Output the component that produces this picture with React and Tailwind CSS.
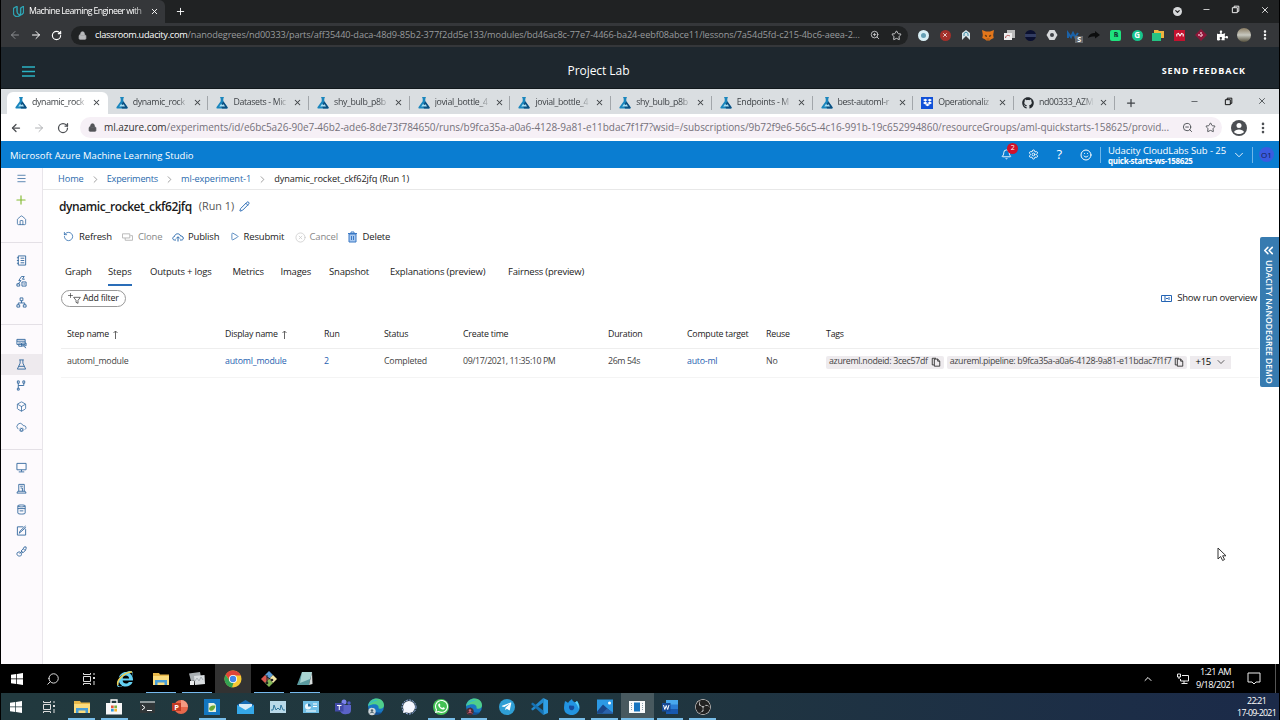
import React from 'react';
import { FaGithub, FaDropbox, FaWhatsapp, FaTelegramPlane, FaInternetExplorer, FaPuzzlePiece } from 'react-icons/fa';
import { SiUdacity, SiObsstudio } from 'react-icons/si';
import {
  ArrowLeft, ArrowRight, RotateCw, Lock, X, Plus, Minus, ZoomIn, ZoomOut, Star, ChevronRight, ChevronDown,
  ChevronUp, ChevronsLeft, Menu, Home, Bell, Settings, Smile, Pencil, Play, CircleX,
  Box, MoreVertical, Search, CloudCog
} from 'lucide-react';

const innerTabs = [
  { title: 'dynamic_rock', icon: 'flask', active: true },
  { title: 'dynamic_rock', icon: 'flask' },
  { title: 'Datasets - Mic', icon: 'flask' },
  { title: 'shy_bulb_p8b', icon: 'flask' },
  { title: 'jovial_bottle_4', icon: 'flask' },
  { title: 'jovial_bottle_4', icon: 'flask' },
  { title: 'shy_bulb_p8b', icon: 'flask' },
  { title: 'Endpoints - M', icon: 'flask' },
  { title: 'best-automl-r', icon: 'flask' },
  { title: 'Operationaliz', icon: 'dropbox' },
  { title: 'nd00333_AZM', icon: 'github' },
];

const Flask = () => (
  <svg viewBox="0 0 12 13" className="h-[13px] w-3 shrink-0">
    <path d="M4.2 1h3.6v1.2h-.5v3.1L11.4 11c.5.8.1 1.6-.8 1.6H1.4c-.9 0-1.3-.8-.8-1.6l4.1-5.7V2.200h-.5z" fill="#1b86bd" />
    <path d="M7.300 5.300 11.400 11c.5.8.1 1.600-.8 1.600H6l-1-3z" fill="#0d4f80" />
    <path d="M3.200 10.500 5 8l1.500 1 1.200-.8 1.300 2.300z" fill="#a9e0f4" />
  </svg>
);

const RestoreIcon = ({ className }) => (
  <svg viewBox="0 0 10 10" className={className} fill="none" stroke="currentColor">
    <path d="M1.500 3h5.500v5.500H1.500zM3.500 3V1.300h5.200V7H7" />
  </svg>
);

const WindowsLogo = () => (
  <svg viewBox="0 0 12 12" className="size-3" fill="#fff">
    <path d="M0 1.700 5.300 1v4.600H0zM6 .9 12 0v5.600H6zM0 6.300h5.300V11L0 10.300zM6 6.300h6V12l-6-.9z" />
  </svg>
);

const TaskView = () => (
  <svg viewBox="0 0 14 12" className="h-3 w-3.5" fill="none" stroke="#ddd">
    <path d="M1.500 3.500h7v5h-7zM1.500 0v1.500h7V0M1.500 12v-1.500h7V12M12 0v2M12 8v4" />
    <path d="M11 5h2" strokeWidth="2" />
  </svg>
);

const Folder = () => (
  <svg viewBox="0 0 16 14" className="h-3.5 w-4">
    <path d="M0 1h6l1 1.500h9V13H0z" fill="#e8b84a" />
    <path d="M0 4h16v9H0z" fill="#fbdc7e" />
    <path d="M2 8h12v5h-2.500v-2.500h-7V13H2z" fill="#4a9fd8" />
  </svg>
);

const Chrome = () => (
  <svg viewBox="0 0 18 18" className="size-[18px]">
    <circle cx="9" cy="9" r="8.500" fill="#f6c933" />
    <path d="M1.600 4.700A8.500 8.500 0 0 1 16.800 5.500H9L5.700 10.500z" fill="#df4538" />
    <path d="M1.600 4.700 5.800 11 9.500 12.700 8 17.400A8.500 8.500 0 0 1 1.600 4.700z" fill="#34a353" />
    <circle cx="9" cy="9" r="4" fill="#fff" />
    <circle cx="9" cy="9" r="3.200" fill="#4285e8" />
  </svg>
);

const Edge = ({ badge }) => (
  <svg viewBox="0 0 18 18" className="size-[18px]">
    <circle cx="9" cy="8.500" r="8" fill="#1878c4" />
    <path d="M1 8C2 2 7 .3 10 .6c5 .4 7.300 4 7 7.200-.4 3-3.500 3.700-5.500 2.500C12.500 7 8 4.500 1 8z" fill="#4fce8b" />
    <path d="M1 8c1.500-4 6-7 10-5-4-.5-8 1.500-10 5z" fill="#2bb8d8" />
    <path d="M6 9c0 4 4 6.500 9 5.200C13 17 9 17.500 6 16c-3.500-2-2-6 0-7z" fill="#124e94" />
    <circle cx="5" cy="13.500" r="3.700" fill={badge === 'dark' ? '#4b3038' : '#cfd6da'} />
    <path d="M2.800 15.500c.8-1.700 3.600-1.700 4.400 0" stroke={badge === 'dark' ? '#db5d74' : '#48616e'} fill="none" />
    <circle cx="5" cy="12.500" r="1.200" fill={badge === 'dark' ? '#d86b7b' : '#48616e'} />
  </svg>
);

const hostTasks = [
  { icon: <WindowsLogo /> },
  { icon: <TaskView /> },
  { icon: <Folder />, open: true },
  {
    open: true,
    icon: (
      <svg viewBox="0 0 16 16" className="size-4">
        <path d="M5 4V1h6v3" fill="none" stroke="#fff" strokeWidth="1.300" />
        <path d="M0 4h16v11.500H0z" fill="#f7f7f7" />
        <path d="M5 6.500h2.700v2.700H5z" fill="#e5533a" />
        <path d="M8.300 6.500H11v2.700H8.300z" fill="#7cb342" />
        <path d="M5 9.800h2.700v2.700H5z" fill="#2f9be0" />
        <path d="M8.300 9.800H11v2.700H8.300z" fill="#f6b52c" />
      </svg>
    ),
  },
  {
    icon: (
      <svg viewBox="0 0 15 12" className="h-3 w-[15px]">
        <path d="M0 0h15v12H0z" fill="#303638" />
        <path d="M0 0h15v2H0z" fill="#8d9799" />
        <path d="m2 4 3 2.500L2 9M7 9.500h5" stroke="#fff" fill="none" />
      </svg>
    ),
  },
  {
    icon: (
      <svg viewBox="0 0 16 16" className="size-4">
        <circle cx="9" cy="8" r="7" fill="#e8694c" />
        <path d="M9 1a7 7 0 0 1 7 7H9z" fill="#f49a82" />
        <path d="M0 4h9v8H0z" fill="#c13b24" />
        <text x="2.200" y="10.800" fontSize="7.500" fontWeight="700" fill="#fff">P</text>
      </svg>
    ),
  },
  {
    open: true,
    icon: (
      <svg viewBox="0 0 16 16" className="size-4">
        <path d="M0 0h16v16H0z" fill="#1376c0" />
        <path d="M4.500 4h5.500l2 2v7H4.500z" fill="#e8f0dd" />
        <path d="M5 10c1-4 4.500-3.500 6.500-3.500-.5 4-3 6-5.500 5z" fill="#68a936" />
      </svg>
    ),
  },
  {
    icon: (
      <svg viewBox="0 0 17 14" className="h-3.5 w-[17px]">
        <path d="M0 5 8.500 0 17 5v9H0z" fill="#176bb3" />
        <path d="M2 4h13v6H2z" fill="#d8ecf8" />
        <path d="M0 5l8.500 5L17 5v9H0z" fill="#35a8e8" />
      </svg>
    ),
  },
  {
    icon: (
      <svg viewBox="0 0 16 12" className="h-3 w-4">
        <path d="M0 0h16v12H0z" fill="#b9d9e8" />
        <path d="M1 9h2l1-5 2 5 2-2 2 2 1-5 2 5h2" stroke="#31779c" fill="none" />
      </svg>
    ),
  },
  {
    icon: (
      <svg viewBox="0 0 16 12" className="h-3 w-4">
        <path d="M0 0h16v12H0z" fill="#71bfe5" />
        <circle cx="5" cy="5.500" r="3" fill="#edf7fc" />
        <path d="M5 5.500V2.500a3 3 0 0 1 3 3z" fill="#2673a5" />
        <path d="M10 3h4M10 5.500h4M3 10h10" stroke="#fff" />
      </svg>
    ),
  },
  {
    icon: (
      <svg viewBox="0 0 16 16" className="size-4">
        <circle cx="9" cy="3" r="2.500" fill="#7b83eb" />
        <circle cx="14" cy="4" r="1.700" fill="#5059c9" />
        <path d="M5 6h11v5a4 4 0 0 1-4 4c-4 1-6-1-7-3z" fill="#5b63c8" />
        <path d="M0 4h8.500v8.500H0z" fill="#424aa8" />
        <path d="M2 6.500h4.500M4.250 6.500V11" stroke="#fff" />
      </svg>
    ),
  },
  { icon: <Edge /> },
  {
    icon: (
      <svg viewBox="0 0 16 16" className="size-4">
        <circle cx="8" cy="8" r="7" fill="none" stroke="#9eb4ee" strokeDasharray="2 1" />
        <circle cx="8" cy="8" r="6" fill="#f5f7ff" />
        <path d="m2 14 1-5 4 4z" fill="#f5f7ff" />
      </svg>
    ),
  },
  {
    open: true,
    icon: (
      <span className="flex size-4 items-center justify-center rounded-full bg-[#43c254]">
        <FaWhatsapp className="size-[15px] text-white" />
      </span>
    ),
  },
  { icon: <Edge badge="dark" />, open: true },
  {
    icon: (
      <span className="flex size-4 items-center justify-center rounded-full bg-[#2f9fd5]">
        <FaTelegramPlane className="size-[11px] text-white" />
      </span>
    ),
  },
  {
    icon: (
      <svg viewBox="0 0 16 16" className="size-[17px]">
        <path d="M11.500 0 16 2v12l-4.500 2z" fill="#2f9fe5" />
        <path d="M11.500 0 0 10.300l1.600 1.500L11.800 4z" fill="#2389ce" />
        <path d="M11.500 16 0 5.700l1.600-1.500L11.800 12z" fill="#1673b5" />
      </svg>
    ),
  },
  {
    open: true,
    icon: (
      <svg viewBox="0 0 16 16" className="size-4">
        <path d="M1 2c1 1 2 .5 3 2C5 2 6.500 1.500 8 0c0 2 2 2.500 3 3.500L13 2c3 4 4 8 0 12-3 3-8 2.500-11 0C-1 11 0 6 1 2z" fill="#2294e2" />
        <path d="M5 7c1-1 2.500.3 4-.4 1.500.6 2 3 0 4.400-2.500 1-4.500-1-4-4z" fill="#174c9c" />
        <path d="M11 3.500 13 2c1.500 2 2.500 5 1.500 8-.5-3-1.500-5-3.500-6.500z" fill="#61d5f5" />
      </svg>
    ),
  },
  {
    open: true,
    icon: (
      <svg viewBox="0 0 16 14" className="h-[15px] w-4">
        <path d="M0 0h16v14H0z" fill="#2c99e4" />
        <path d="M0 12 6 5l10 9H0z" fill="#1b4689" />
        <path d="m5 14 5-5 6 4v1z" fill="#2b63ac" />
        <circle cx="12.500" cy="3.500" r="1.500" fill="#fff" />
      </svg>
    ),
  },
  {
    open: true,
    active: true,
    icon: (
      <svg viewBox="0 0 16 12" className="h-3 w-4">
        <path d="M0 0h16v12H0z" fill="#f8fafb" />
        <path d="M5 1.500h6v9H5z" fill="#1674bf" />
        <path d="M2.500 2v8M13.500 2v8" stroke="#8aa0ad" strokeDasharray="1 1" />
      </svg>
    ),
  },
  {
    open: true,
    icon: (
      <svg viewBox="0 0 16 14" className="h-3.5 w-4">
        <path d="M4 0h12v5H4z" fill="#49a8ed" />
        <path d="M4 4.500h12V9H4z" fill="#2b7cd3" />
        <path d="M4 9h12v5H4z" fill="#1858b0" />
        <path d="M0 3h8.500v8.500H0z" fill="#174a96" />
        <path d="m1.500 5 1.300 4.500L4.250 5.500l1.450 4L7 5" stroke="#fff" fill="none" />
      </svg>
    ),
  },
  { icon: <SiObsstudio className="size-4 rounded-full bg-[#222] text-[#dedede]" />, open: true },
];

const labTasks = [
  { icon: <WindowsLogo /> },
  { icon: <Search className="size-3.5 -scale-x-100 text-[#ddd]" strokeWidth={1.7} /> },
  { icon: <TaskView /> },
  {
    icon: (
      <span className="relative flex">
        <FaInternetExplorer className="size-4 text-[#64d0f2]" />
        <svg viewBox="0 0 18 18" className="absolute -inset-px size-[18px]" fill="none" stroke="#f1cf51" strokeWidth="1.500">
          <path d="M2 15C0 10 9 2 16 2" />
        </svg>
      </span>
    ),
  },
  { icon: <Folder />, open: true },
  {
    open: true,
    icon: (
      <svg viewBox="0 0 18 16" className="h-4 w-[18px]">
        <path d="M1 2.500 12 1l1.500 8L3 10z" fill="#a9afb3" />
        <path d="m6 5 10.500-1 .5 9-10 1z" fill="#d9dde0" />
        <path d="m7 10 2-3 2 3 2-4 2 3" stroke="#a8b0b5" fill="none" />
        <path d="M2 10h4v4H2z" fill="#e9ebec" />
      </svg>
    ),
  },
  { icon: <Chrome />, active: true },
  {
    open: true,
    icon: (
      <svg viewBox="0 0 18 18" className="size-[18px]">
        <path d="m9 1 4 4-4 4-4-4z" fill="#5b9bd5" />
        <path d="m13 5 4 4-4 4-4-4z" fill="#f2e6a6" />
        <path d="m5 5 4 4-4 4-4-4z" fill="#d95850" />
        <path d="m9 9 4 4-4 4-4-4z" fill="#83b856" />
        <path d="M7 5v8M7 7l5 3" stroke="#222" />
        <circle cx="7" cy="13" r="1.300" fill="#222" />
        <circle cx="12" cy="10" r="1.300" fill="#222" />
      </svg>
    ),
  },
  {
    open: true,
    icon: (
      <svg viewBox="0 0 17 16" className="mr-0.5 h-4 w-[17px]">
        <path d="M6 1h10l-3 13H1z" fill="#5b9ba0" />
        <path d="M6 1h10l-2 7-10 4z" fill="#a9d4d2" />
        <path d="m13 14 3-13 .5 12z" fill="#d8dedd" />
      </svg>
    ),
  },
];

// Small line icons, all on a 12px grid
const lineIcon = (d) => ({ className }) => (
  <svg viewBox="0 0 12 12" fill="none" stroke="currentColor" className={className}>
    <path d={d} />
  </svg>
);

const Notebook = lineIcon('M2.500 1h8v10h-8zM1 3h2M1 6h2M1 9h2M5 3.500h4M5 6h4M5 8.500h4');
const AutoBolt = lineIcon('M6 .5h3L7 3.500h2.500M6 .5 3 5h2.500L2 9M6.500 6.500h4.500v4.500H6.500zM1 8.500h3v2.500H1zM8 8.700h2');
const Designer = lineIcon('M4.500 1h3v3h-3zM6 4v2.500M2.500 8.500v-2h7v2M1 8.500h3V11H1zM8 8.500h3V11H8z');
const Datasets = lineIcon('M1 1.500h9V7H1zM1 3.500h9M2.500 5.500h3M3 7v2h4M6 5.500h5v3H6zM8 8.500l3 2.500');
const Beaker = lineIcon('M3.500 1h5M4.500 1v3.500L1.500 11h9L7.500 4.500V1M3 8h6');
const Pipelines = lineIcon('M1.500 1h2v2.500h-2zM7.500 1h2v2.500h-2zM2.500 3.500v5.500M8.500 3.500V6h-6M1.500 9h2v2h-2z');
const Compute = lineIcon('M1 1.500h10v7H1zM6 8.500V10.500M3 10.800h6');
const Server = lineIcon('M3 9V1.500h6V9M1 11l1-2h8l1 2zM4.500 3.500h3M5 5.500h2V9');
const Datastore = lineIcon('M2 2c0-1.300 8-1.300 8 0v8c0 1.300-8 1.300-8 0zM2 2c0 1.500 8 1.500 8 0M2 5h8M4 7.500h4');
const Labeling = lineIcon('M10.500 4.500V11h-9V2H8M3.500 9l1-2.500L10.500 1M3.500 9 11 2.500');
const LinkedServices = lineIcon('M1 8.500c0-2 2-2 3.500-2L6 8c0 1.500 0 3-2 3s-3-1-3-2.500zM5.500 5.500 8 3l2 2-2.500 2.500zM8 3l1-2h2v2l-1 2M4 8.500l3-3');
const CopyDoc = lineIcon('M3.500 9.500h-2v-8H6M4 2.500h4L10.500 5v6H4zM8 2.500V5h2.500');
const CloneIcon = lineIcon('M.5 2h8v4.500h-8zM3.500 6.500V9h8V4H9');
const CloudPublish = lineIcon('M4 9H2.500C.3 9 0 6 2.500 5.500 3 2 8 2 8.500 5 11.500 4.500 12.500 9 9.500 9H8M6 10.500V6M4.200 7.500 6 5.700l1.800 1.800');
const FilterIcon = lineIcon('M1 2h10L7.500 6.500V11l-3-1.500v-3z');

const navGroups = [
  [{ Icon: Menu }, { Icon: Plus, green: true }, { Icon: Home }],
  [{ Icon: Notebook }, { Icon: AutoBolt }, { Icon: Designer }],
  [{ Icon: Datasets }, { Icon: Beaker, active: true }, { Icon: Pipelines }, { Icon: Box }, { Icon: CloudCog }],
  [{ Icon: Compute }, { Icon: Server }, { Icon: Datastore }, { Icon: Labeling }, { Icon: LinkedServices }],
];

const extensions = [
  <span className="size-[11px] rounded-full border-[3px] border-[#d9eff5] bg-[#64a0b5]" />,
  <span className="flex size-[11px] items-center justify-center rounded-full bg-[#a3302a]"><X className="size-[6px] text-white" strokeWidth={3} /></span>,
  <svg viewBox="0 0 10 12" className="h-3 w-2.5"><path d="M1 11V4l4-3 4 3v7L5 7z" fill="#d7e5ea" /><path d="M3 7V4.500L5 3l2 1.500V7" stroke="#3c8ca5" fill="none" /></svg>,
  <svg viewBox="0 0 12 12" className="size-3"><path d="m0 1 4 1.500h4L12 1l-.8 5 .5 3-3 1.500-1 1H4.300l-1-1-3-1.500.5-3z" fill="#e2761b" /><path d="m3 6 2 1-1 .8zm6 0L7 7l1 .8zM4.500 10h3" fill="#3d260e" stroke="#5b340c" strokeWidth=".5" /></svg>,
  <svg viewBox="0 0 11 10" className="h-2.5 w-[11px]"><path d="M3 0h8v8H3z" fill="#bbb" /><path d="M0 3h8v7H0z" fill="#eee" /><path d="M1.500 8C2 5 4 5 6 6" stroke="#b14b4b" fill="none" /></svg>,
  <span className="flex size-[11px] items-center rounded-full bg-[#0b1030]"><i className="h-[3px] w-full bg-[#333d62]" /></span>,
  <svg viewBox="0 0 12 12" className="size-3"><path d="m3.500 1h5L11.500 6l-3 5h-5L.5 6z" fill="#d7d9db" /><circle cx="6" cy="6" r="2" fill="#404347" /></svg>,
  <span className="relative flex">
    <svg viewBox="0 0 12 10" className="h-2.5 w-3"><path d="M1 8V3l3 4 2-4 2 4 3-4" stroke="#1b62a8" strokeWidth="2" fill="none" /></svg>
    <b className="absolute -right-1 top-1.5 h-[7px] w-2 bg-[#666a6e] text-center text-[7px] leading-[7px] text-white">S</b>
  </span>,
  <svg viewBox="0 0 12 10" className="h-2.5 w-3"><path d="M0 8c1-4 4-5 7-5V1l5 4-5 3.500v-2C4 6.500 2 6.500 0 8z" fill="#0c0d0e" /></svg>,
  <span className="flex size-[11px] items-center justify-center rounded-[2px] bg-[#1fe27e] text-[7px] font-bold text-[#133]">℞</span>,
  <span className="flex size-[11px] items-center justify-center rounded-full bg-[#18c48c] text-[8px] font-bold text-white">G</span>,
  <svg viewBox="0 0 12 11" className="h-[11px] w-3"><path d="M2 0h4l1 1h5v7H2z" fill="#f0b440" /><path d="M0 3h9v8H0z" fill="#25c384" /></svg>,
  <span className="flex size-[11px] items-center justify-center bg-[#c4122f]">
    <svg viewBox="0 0 10 6" className="h-1.5 w-2"><path d="M1 5V2l2-1 2 3 2-3 2 1v3" stroke="#fff" strokeWidth="1.300" fill="none" /></svg>
  </span>,
  <svg viewBox="0 0 12 12" className="size-3"><path d="m6 0 6 6-6 6-6-6z" fill="#8d1638" /><path d="M3 6h6M6 3v6" stroke="#e8a5b7" strokeWidth="1.500" strokeDasharray="2 1" /></svg>,
  <FaPuzzlePiece className="size-[11px] text-white" />,
];

const columns = [
  { key: 'step', label: 'Step name', sort: true },
  { key: 'display', label: 'Display name', sort: true },
  { key: 'run', label: 'Run' },
  { key: 'status', label: 'Status' },
  { key: 'created', label: 'Create time' },
  { key: 'duration', label: 'Duration' },
  { key: 'compute', label: 'Compute target' },
  { key: 'reuse', label: 'Reuse' },
  { key: 'tags', label: 'Tags' },
];

const TabIcon = ({ icon }) => {
  if (icon === 'dropbox') {
    return (
      <span className="flex h-3 w-3 shrink-0 items-center justify-center bg-[#0f50d8]">
        <FaDropbox className="size-[9px] text-white" />
      </span>
    );
  }
  if (icon === 'github') return <FaGithub className="size-3 shrink-0 text-[#24292e]" />;
  return <Flask />;
};

const OuterBrowser = () => (
  <>
    {/* Tab strip */}
    <div className="flex h-[23px] bg-[#202223] text-white">
      <div className="flex w-[164px] items-center rounded-tr-md bg-[#35373a] pl-3">
        <SiUdacity className="size-[11px] shrink-0 stroke-[#2fb6c8] stroke-1 text-[#2fb6c8]" />
        <span className="ml-[5px] w-[115px] overflow-hidden whitespace-nowrap text-[8.800px] tracking-[-0.640px] [mask-image:linear-gradient(to_right,#000_90%,#0006)]">
          Machine Learning Engineer with
        </span>
        <X className="ml-1.5 size-[9px] shrink-0" strokeWidth={2.5} />
      </div>
      <Plus className="ml-2.5 mt-1.5 size-[11px]" />
      <div className="ml-auto flex items-center gap-5 pr-[9px]">
        <span className="flex size-[9px] items-center justify-center rounded-full bg-[#d7d9db]">
          <ChevronDown className="size-[7px] text-[#222]" strokeWidth={4} />
        </span>
        <Minus className="mb-1 size-[9px]" />
        <RestoreIcon className="mb-1 size-[9px]" />
        <X className="mb-1 size-2.5" />
      </div>
    </div>

    {/* Address bar */}
    <div className="flex h-6 items-center bg-[#35373a] text-white">
      <ArrowLeft className="ml-2 size-3 shrink-0 text-[#8b8d90]" />
      <ArrowRight className="ml-[9px] size-3 shrink-0" />
      <RotateCw className="ml-[9px] size-[11px] shrink-0" strokeWidth={2.5} />
      <div className="ml-[9px] flex h-[19px] w-[837px] shrink-0 items-center rounded-full bg-[#202223] pl-[7px] pr-1.5">
        <Lock className="size-[9px] shrink-0 fill-[#b8babc] text-[#b8babc]" />
        <span className="ml-2 min-w-0 flex-1 whitespace-nowrap text-[9.200px] tracking-[-0.107px] text-[#999b9e]">
          <span className="tracking-[-0.270px] text-white">classroom.udacity.com</span>
          /nanodegrees/nd00333/parts/aff35440-daca-48d9-85b2-377f2dd5e133/modules/bd46ac8c-77e7-4466-ba24-eebf08abce11/lessons/7a54d5fd-c215-4bc6-aeea-2...
        </span>
        <ZoomIn className="size-2.5 shrink-0 text-[#d3d4d6]" />
        <Star className="ml-[11px] size-[11px] shrink-0 text-[#d3d4d6]" />
      </div>
      <div className="ml-[5px] flex shrink-0">
        {extensions.map((icon, i) => (
          <span key={i} className="flex w-[21.350px] items-center justify-center">{icon}</span>
        ))}
      </div>
      <span className="ml-1 size-3.5 shrink-0 rounded-full bg-linear-to-b from-[#8a7d64] via-[#c8c9c0] to-[#55503e]" />
      <MoreVertical className="ml-2 size-3 shrink-0" strokeWidth={3} />
    </div>
  </>
);

const ClassroomHeader = () => (
  <div className="grid h-[42px] grid-cols-3 items-center border-b border-[#11181c] bg-[#1e272e] pt-[7px] text-white">
    <svg viewBox="0 0 13 11" className="ml-[21px] h-[11px] w-[13px]" stroke="#2bb3c4" strokeWidth="1.500">
      <path d="M0 1h13M0 5.500h13M0 10h13" />
    </svg>
    <span className="pr-[83px] text-center text-[12px] tracking-[-0.050px]">Project Lab</span>
    <span className="pr-[33px] text-right text-[9px] font-bold tracking-[0.950px]">SEND FEEDBACK</span>
  </div>
);

const InnerBrowser = () => (
  <>
    <div className="flex h-[25px] bg-[#dadee1] pl-1.5 pt-[3px] text-[#3f4347]">
      {innerTabs.map((tab, i) => (
        <div
          key={i}
          className={`flex w-[100.700px] shrink-0 items-center pb-px pl-2 ${tab.active ? 'rounded-t-md bg-white' : ''}`}
        >
          <TabIcon icon={tab.icon} />
          <span className="ml-[5px] w-[55px] overflow-hidden whitespace-nowrap text-[8.800px] tracking-[-0.350px] [mask-image:linear-gradient(to_right,#000_80%,transparent)]">
            {tab.title}
          </span>
          <X className="ml-[5px] size-[9px] shrink-0" strokeWidth={2.800} />
          {i > 0 && <i className="ml-auto h-3.5 w-px bg-[#a2a6aa]" />}
        </div>
      ))}
      <Plus className="ml-2.5 mt-[5px] size-3" strokeWidth={2.500} />
      <div className="ml-auto mb-1 flex items-center gap-[24.500px] pr-3">
        <Minus className="size-[9px]" />
        <RestoreIcon className="size-[9px] text-black" />
        <X className="size-2.5" />
      </div>
    </div>

    <div className="flex h-[27px] items-center bg-white text-[#4c4f53]">
      <ArrowLeft className="ml-[9px] size-3 shrink-0" strokeWidth={2.500} />
      <ArrowRight className="ml-[11px] size-3 shrink-0 text-[#b0b2b5]" />
      <RotateCw className="ml-3 size-3 shrink-0" strokeWidth={2.500} />
      <div className="ml-[11px] flex h-[21px] w-[1142px] shrink-0 items-center rounded-full bg-[#f6f0f6] pl-2 pr-1.5">
        <Lock className="size-[9px] shrink-0 fill-[#55565a]" />
        <span className="ml-[7px] min-w-0 flex-1 whitespace-nowrap text-[10px] tracking-[-0.052px] text-[#75717a]">
          <span className="text-[#333]">ml.azure.com</span>
          /experiments/id/e6bc5a26-90e7-46b2-ade6-8de73f784650/runs/b9fca35a-a0a6-4128-9a81-e11bdac7f1f7?wsid=/subscriptions/9b72f9e6-56c5-4c16-991b-19c652994860/resourceGroups/aml-quickstarts-158625/provid...
        </span>
        <ZoomOut className="size-[11px] shrink-0" />
        <Star className="ml-3 size-[11px] shrink-0" />
      </div>
      <svg viewBox="0 0 16 16" className="ml-[9px] size-4 shrink-0">
        <circle cx="8" cy="8" r="8" fill="#4c4f53" />
        <circle cx="8" cy="5.500" r="2.500" fill="#fff" />
        <path d="M3 12c1-3.500 9-3.500 10 0-2.500 2.700-7.500 2.700-10 0z" fill="#fff" />
      </svg>
      <MoreVertical className="ml-[9px] size-3.5 shrink-0" strokeWidth={2.500} />
    </div>
  </>
);

const AzureBar = () => (
  <div className="flex h-[27px] items-center bg-[#0a7dd1] text-white">
    <span className="ml-[9px] mt-[3px] whitespace-nowrap text-[9.500px] tracking-[0.040px]">Microsoft Azure Machine Learning Studio</span>
    <div className="ml-auto flex items-center">
      <span className="relative flex">
        <Bell className="size-[11px]" />
        <b className="absolute -top-[6px] left-1.5 flex size-[11px] items-center justify-center rounded-full bg-[#d0112b] text-[7px] font-normal">2</b>
      </span>
      <Settings className="ml-4 size-[11px]" />
      <span className="ml-[17px] text-[13px] leading-none">?</span>
      <Smile className="ml-[18px] size-3" />
      <i className="ml-2 h-4 w-px bg-[#6fb6e8]" />
      <div className="ml-[7px] w-[120px] whitespace-nowrap pt-[3px] text-[9.500px] leading-[10px] tracking-[-0.080px]">
        Udacity CloudLabs Sub - 25
        <b className="block text-[8px] tracking-[-0.300px]">quick-starts-ws-158625</b>
      </div>
      <ChevronDown className="ml-1 size-3.5" strokeWidth={1.500} />
      <i className="ml-1.5 h-4 w-px bg-[#6fb6e8]" />
      <span className="ml-1.5 mr-[5px] flex size-[15px] items-center justify-center rounded-full bg-[#3a5be0] text-[8px] text-[#12204e]">O1</span>
    </div>
  </div>
);

const Sidebar = () => (
  <nav className="w-[42px] shrink-0 border-r border-[#e8e5ea] bg-[#fdfafd]">
    {navGroups.map((group, i) => (
      <div key={i} className={i > 0 ? 'mt-[11px] border-t border-[#e4e0e6] pt-[7.300px]' : ''}>
        {group.map(({ Icon, active, green }, j) => (
          <div key={j} className={`flex h-[21px] items-center justify-center pr-px ${active ? 'bg-[#eeeaee]' : ''}`}>
            {green
              ? <Icon className="size-3.5 text-[#86bb35]" strokeWidth={2} />
              : <Icon className="size-[11px] text-[#34699f]" strokeWidth={1.700} />}
          </div>
        ))}
      </div>
    ))}
  </nav>
);

const Crumb = () => <ChevronRight className="mx-[6px] size-[11px] text-[#777]" strokeWidth={1.500} />;

const Tag = ({ children }) => (
  <span className="flex h-[13px] items-center rounded-[2px] bg-[#eeebee] px-[3px]">
    {children}
    <CopyDoc className="ml-[3px] size-2.5 text-[#222]" />
  </span>
);

const RunPage = () => (
  <main className="flex min-w-0 flex-1 flex-col bg-white text-[#222]">
    <div className="flex h-[22px] items-center border-b border-[#e8e8e8] pl-[15px] pt-px text-[9.200px] tracking-[-0.080px] text-[#2a6aad]">
      <span>Home</span><Crumb />
      <span className="tracking-[-0.220px]">Experiments</span><Crumb />
      <span>ml-experiment-1</span><Crumb />
      <span className="text-[#222]">dynamic_rocket_ckf62jfq (Run 1)</span>
    </div>

    <div className="mt-[7px] flex h-[18px] items-center pl-4 pt-px text-[12px]">
      <span className="font-semibold tracking-[-0.420px] text-[#1a1a1a]">dynamic_rocket_ckf62jfq</span>
      <span className="ml-[7px] text-[10.800px] text-[#555]">(Run 1)</span>
      <Pencil className="ml-[5px] size-[11px] text-[#1f62b0]" strokeWidth={2} />
    </div>

    {/* Commands */}
    <div className="mt-3.5 flex h-4 items-center pl-5 text-[9.500px] tracking-[-0.160px]">
      <RotateCw className="mb-px size-[11px] -scale-x-100 text-[#2a6aad]" strokeWidth={1.700} />
      <span className="ml-[5px] w-[43px]">Refresh</span>
      <CloneIcon className="size-[11px] text-[#b5b5b5]" />
      <span className="ml-[5px] w-[34px] text-[#888]">Clone</span>
      <CloudPublish className="size-3 text-[#2a6aad]" />
      <span className="ml-1 w-[41.500px]">Publish</span>
      <Play className="mb-px size-[9px] text-[#2a6aad]" />
      <span className="ml-[5px] w-[51px]">Resubmit</span>
      <CircleX className="size-[11px] text-[#c5c5c5]" strokeWidth={1.500} />
      <span className="ml-1 w-[37px] text-[#888]">Cancel</span>
      <svg viewBox="0 0 11 12" className="mb-px h-3 w-[11px]" fill="none" stroke="#3a78c4">
        <path d="M2 3h7v8H2z" fill="#a9c9f0" />
        <path d="M1 2.500h9M4 2.500V1h3v1.500M4.500 5v4M6.500 5v4" />
      </svg>
      <span className="ml-[5px]">Delete</span>
    </div>

    {/* Tabs */}
    <div className="mt-[19px] flex h-[22px] whitespace-nowrap pl-[22px] text-[9.500px] leading-4 tracking-[-0.200px]">
      <span className="w-[43px]">Graph</span>
      <span className="mr-[18px] w-6 border-b-2 border-[#2a6db8] tracking-[-0.120px]">Steps</span>
      <span className="w-[82.500px]">Outputs + logs</span>
      <span className="w-[48px]">Metrics</span>
      <span className="w-[48.500px]">Images</span>
      <span className="w-[61px]">Snapshot</span>
      <span className="w-[118px]">Explanations (preview)</span>
      <span>Fairness (preview)</span>
    </div>

    <div className="mt-[3px] flex h-[18px] items-center justify-between pl-[18px] pr-[22px]">
      <div className="flex h-[17px] w-[65px] items-center whitespace-nowrap rounded-full border border-[#999] pl-[5px] text-[8.800px] tracking-[-0.200px]">
        <Plus className="mb-1.5 size-[7px] shrink-0" />
        <FilterIcon className="-ml-px mt-[3px] size-2 shrink-0" />
        <span className="ml-0.5 pt-px">Add filter</span>
      </div>
      <div className="flex items-center text-[9.500px] tracking-[-0.260px]">
        <svg viewBox="0 0 11 7" className="mr-[5px] h-[7px] w-[11px]" fill="none" stroke="#2464b4">
          <path d="M.5.500h10v6H.5zM4 .5v6M5 3.500h2M8 2v3" />
        </svg>
        Show run overview
      </div>
    </div>

    {/* Steps table */}
    <div className="ml-[18px] mr-5 mt-3 text-[8.800px] tracking-[-0.220px]">
      <div className="grid h-[30px] grid-cols-[158px_99px_60px_79px_145px_79px_79px_60px_1fr] items-center whitespace-nowrap border-b border-[#eee] pl-1.5 pt-0.5">
        {columns.map((column) => (
          <span key={column.key} className="flex items-center">
            {column.label}
            {column.sort && (
              <svg viewBox="0 0 7 9" className="ml-[3px] h-[9px] w-[7px]" fill="none" stroke="#555" strokeWidth=".9">
                <path d="M3.500 9V1M1.500 3 3.500 1l2 2" />
              </svg>
            )}
          </span>
        ))}
      </div>
      <div className="grid h-[29px] grid-cols-[158px_99px_60px_79px_145px_79px_79px_60px_1fr] items-center whitespace-nowrap border-b border-[#f4f4f4] pb-[3px] pl-1.5 text-[#444]">
        <span>automl_module</span>
        <span className="text-[#1f62b0]">automl_module</span>
        <span className="text-[#1f62b0]">2</span>
        <span>Completed</span>
        <span className="tracking-[-0.400px]">09/17/2021, 11:35:10 PM</span>
        <span className="tracking-[-0.400px]">26m 54s</span>
        <span className="text-[#1f62b0]">auto-ml</span>
        <span>No</span>
        <div className="flex gap-[3px] pt-px text-[8.800px] tracking-[-0.290px]">
          <Tag>azureml.nodeid: 3cec57df</Tag>
          <Tag>azureml.pipeline: b9fca35a-a0a6-4128-9a81-e11bdac7f1f7</Tag>
          <span className="flex h-[13px] items-center bg-[#eeebee] pl-[5px] pr-1 text-[9.500px] text-black">
            +15 <ChevronDown className="ml-1 size-3" strokeWidth={1.200} />
          </span>
        </div>
      </div>
    </div>
  </main>
);

const Taskbars = () => (
  <>
    <div className="flex h-[29px] items-stretch bg-black text-white">
      <div className="-ml-0.5 flex">
        {labTasks.map((task, i) => (
          <div key={i} className={`relative flex w-9 items-center justify-center ${task.active ? 'bg-[#323232]' : ''}`}>
            {task.icon}
            {task.open && <i className="absolute inset-x-[3px] bottom-0 h-px bg-[#76b9ed]" />}
          </div>
        ))}
      </div>
      <div className="ml-auto flex items-center">
        <ChevronUp className="mr-[23px] size-3" />
        <svg viewBox="0 0 12 12" className="size-3" fill="none" stroke="#eee">
          <path d="M5 2.500h6.500v5.500H3.500V6M7 8v2M4.500 10.500h6M.5 1h3v3h-3zM2 4v2" />
        </svg>
        <div className="ml-[7px] mr-[7px] pb-0.5 text-center text-[9.200px] leading-[13px] tracking-[-0.500px]">
          <div>1:21 AM</div>
          <div>9/18/2021</div>
        </div>
        <svg viewBox="0 0 14 13" className="ml-[5px] mr-[14px] h-[13px] w-3.5" fill="none" stroke="#eee">
          <path d="M1 1h12v9H9l-2 2-2-2H1z" />
        </svg>
        <i className="mr-[3px] h-full w-px bg-[#555]" />
      </div>
    </div>
    <div className="flex h-[27px] bg-linear-to-r from-[#21393e] via-[#20363f] to-[#1b2a49] text-white">
      <div className="-ml-px flex">
        {hostTasks.map((task, i) => (
          <div key={i} className={`relative flex w-[32.700px] items-center justify-center ${task.active ? 'bg-[#48595f]' : ''}`}>
            {task.icon}
            {task.open && <i className={`absolute bottom-0 h-0.5 bg-[#78bde8] ${task.active ? 'inset-x-0' : 'inset-x-[3px]'}`} />}
          </div>
        ))}
      </div>
      <div className="ml-auto mr-[3px] flex flex-col items-center text-[8.800px] leading-3 tracking-[-0.700px]">
        <span className="pt-[2px]">22:21</span>
        <span>17-09-2021</span>
      </div>
    </div>
  </>
);

export default function App() {
  return (
    <div className="relative flex h-[720px] w-[1280px] flex-col overflow-hidden border-x border-black bg-white font-['Open_Sans','Noto_Sans',sans-serif]">
      <OuterBrowser />
      <ClassroomHeader />
      <InnerBrowser />
      <AzureBar />
      <div className="flex min-h-0 flex-1">
        <Sidebar />
        <RunPage />
      </div>
      <Taskbars />

      {/* Demo drawer handle */}
      <div className="absolute right-0 top-[237px] flex h-[150px] w-[19px] flex-col items-center rounded-l-[2px] bg-[#377bb0] pr-0.5 pt-1.5 text-white">
        <ChevronsLeft className="size-[15px]" strokeWidth={2.500} />
        <span className="mt-0.5 whitespace-nowrap text-[8.500px] font-semibold leading-[18px] [writing-mode:vertical-rl]">UDACITY NANODEGREE DEMO</span>
      </div>

      {/* Mouse pointer */}
      <svg viewBox="0 0 10 15" className="absolute left-[1216px] top-[547px] h-[15px] w-2.5">
        <path d="M1 1v11l2.600-2.500 2 4 2-1-2-3.700H9z" fill="#fff" stroke="#333" />
      </svg>
    </div>
  );
}
